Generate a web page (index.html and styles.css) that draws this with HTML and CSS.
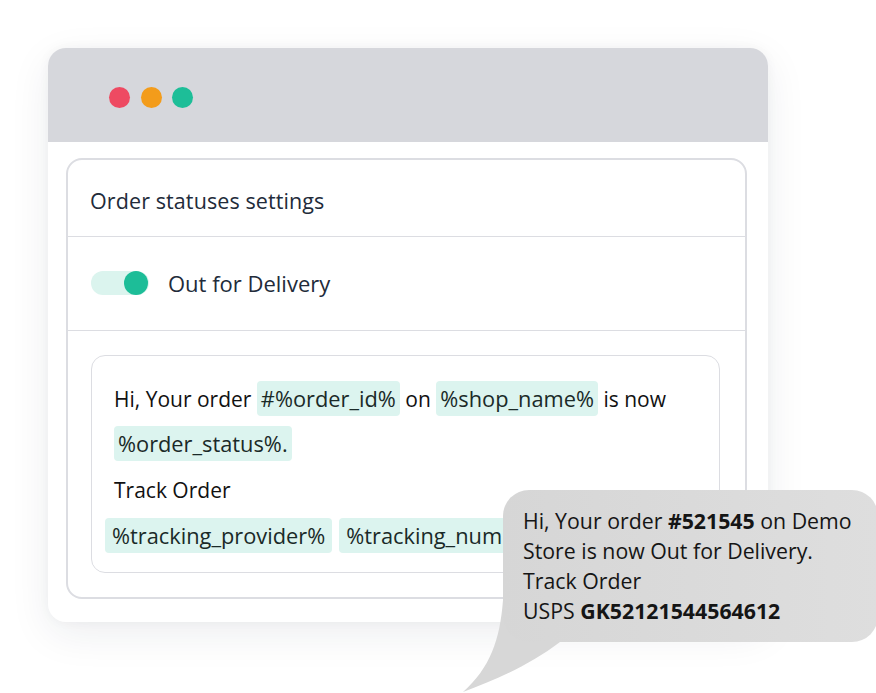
FILE: index.html
```html
<!DOCTYPE html>
<html>
<head>
<meta charset="utf-8">
<link rel="stylesheet" href="styles.css">
</head>
<body>
<div class="stage">
  <div class="window">
    <div class="titlebar">
      <span class="dot red"></span>
      <span class="dot orange"></span>
      <span class="dot green"></span>
    </div>
    <div class="wbody">
      <div class="card">
        <div class="card-head">Order statuses settings</div>
        <div class="card-row">
          <span class="toggle"><span class="knob"></span></span>
          <span class="row-label">Out for Delivery</span>
        </div>
        <div class="card-msg">
          <div class="msgbox">
            <div class="line">Hi, Your order <span class="tag">#%order_id%</span> on <span class="tag">%shop_name%</span> is now</div>
            <div class="line"><span class="tag">%order_status%.</span></div>
            <div class="line">Track Order</div>
            <div class="line tags"><span class="tag wide">%tracking_provider%</span><span class="tag wide">%tracking_number%</span></div>
          </div>
        </div>
      </div>
    </div>
  </div>

  <svg class="tail" width="110" height="113" viewBox="0 0 110 113"><path d="M43 0 L43 20 C40 60 30 88 3 112 C35 100 70 85 100 62 L100 0 Z" fill="#d7d7d7"/></svg>
  <div class="bubble">
    <div>Hi, Your order <b>#521545</b> on Demo</div>
    <div>Store is now Out for Delivery.</div>
    <div>Track Order</div>
    <div>USPS <b>GK52121544564612</b></div>
  </div>
</div>
</body>
</html>
```
FILE: styles.css
```css
html, body { margin: 0; padding: 0; background: #ffffff; }
body { font-family: "Open Sans", "Noto Sans", sans-serif; }
.stage { position: relative; width: 876px; height: 693px; overflow: hidden; }

.window {
  margin: 48px 0 0 48px;
  width: 720px;
  height: 574px;
  border-radius: 18px;
  background: #ffffff;
  box-shadow: 0 12px 40px rgba(30, 35, 60, 0.08), 0 0 12px rgba(30, 35, 60, 0.04);
  overflow: hidden;
  display: flex;
  flex-direction: column;
}
.titlebar {
  height: 94px;
  background: #d6d7dc;
  display: flex;
  align-items: center;
  gap: 10.5px;
  padding: 4px 0 0 61px;
  box-sizing: border-box;
}
.dot { width: 21px; height: 21px; border-radius: 50%; display: block; }
.red { background: #ee4a62; }
.orange { background: #f39c1b; }
.green { background: #1dbe98; }

.wbody { padding: 16px 21px 0 18px; }
.card {
  border: 2px solid #dcdde2;
  border-radius: 16px;
  height: 441px;
  box-sizing: border-box;
  display: flex;
  flex-direction: column;
}
.card-head {
  height: 77px;
  border-bottom: 1px solid #dcdde2;
  display: flex;
  align-items: center;
  padding-left: 22px;
  font-size: 21.5px;
  font-weight: 500;
  letter-spacing: 0.1px;
  color: #222b3a;
  padding-top: 4px;
  box-sizing: border-box;
}
.card-row {
  height: 94px;
  border-bottom: 1px solid #dcdde2;
  display: flex;
  align-items: center;
  padding-left: 23px;
  box-sizing: border-box;
  padding-bottom: 2px;
}
.toggle {
  width: 58px; height: 24px;
  border-radius: 12px;
  background: #dbf4ee;
  position: relative;
  display: block;
}
.knob {
  position: absolute;
  right: 1px; top: 0;
  width: 24px; height: 24px;
  border-radius: 50%;
  background: #1dbd98;
}
.row-label { margin-left: 19px; font-size: 22px; font-weight: 500; color: #222b3a; }

.card-msg { padding: 24px 25px 0 23px; }
.msgbox {
  border: 1px solid #dcdde2;
  border-radius: 14px;
  height: 218px;
  box-sizing: border-box;
  padding: 25px 10px 0 22px;
  font-size: 21px;
  font-weight: 500;
  color: #111111;
}
.line { height: 45px; line-height: 35px; white-space: nowrap; }
.line:nth-child(3) { height: 47px; line-height: 38px; }
.tag {
  display: inline-block;
  background: #dcf4ef;
  border-radius: 4px;
  padding: 0 4px;
  height: 35px;
  line-height: 35px;
  font-size: 21.8px;
  color: #1a2a28;
}
.tags { margin-left: -9px; display: flex; gap: 7px; }
.tag.wide { padding: 0 7px; }

.bubble {
  position: absolute;
  left: 503px;
  top: 490px;
  width: 375px;
  height: 152px;
  box-sizing: border-box;
  border-radius: 26px;
  background: linear-gradient(90deg, #d6d6d6, #dedede);
  padding: 16px 0 0 20px;
  font-size: 21.3px;
  line-height: 30px;
  color: #151515;
}
.bubble b { font-weight: 700; }
.tail { position: absolute; left: 460px; top: 580px; }
```
